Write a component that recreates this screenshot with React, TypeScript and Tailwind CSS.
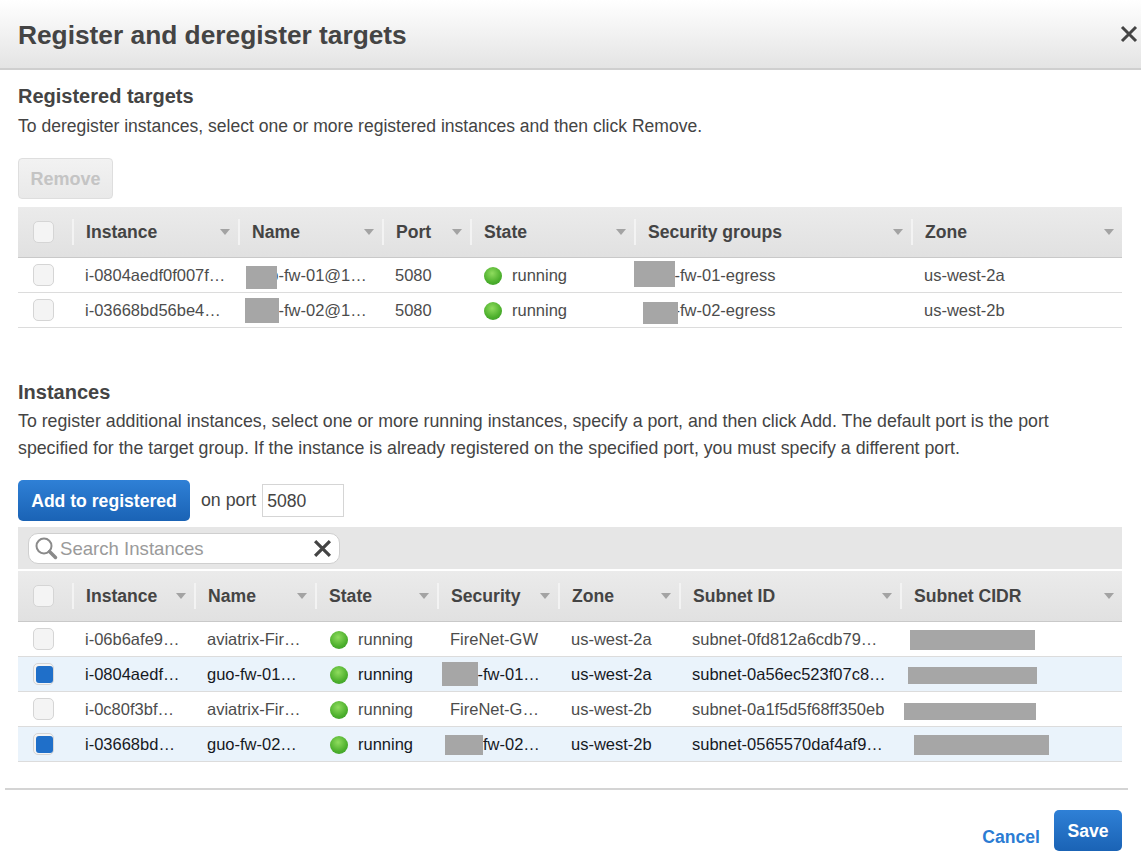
import React from "react";

type Row = {
  cells: React.ReactNode[];
  selected?: boolean;
  cover?: string[];
};

const registeredCols = "grid-cols-[54px_166px_144px_88px_164px_277px_211px]";
const instanceCols = "grid-cols-[54px_122px_121px_122px_121px_121px_221px_222px]";

const registeredHead = ["Instance", "Name", "Port", "State", "Security groups", "Zone"];
const instanceHead = ["Instance", "Name", "State", "Security", "Zone", "Subnet ID", "Subnet CIDR"];

function Running({ ml }: { ml: string }) {
  return (
    <span className={`flex items-center gap-[10px] ${ml}`}>
      <span className="h-[18px] w-[18px] rounded-full bg-[radial-gradient(circle_at_45%_35%,#8fdc5e,#4caf2c_60%,#35962a)]" />
      running
    </span>
  );
}

const registeredRows: Row[] = [
  {
    cells: ["i-0804aedf0f007f…", "guo-fw-01@1…", "5080", <Running ml="ml-[1px]" />, "guo-fw-01-egress", "us-west-2a"],
    cover: [
      "left-[228px] top-[8px] h-[23px] w-[31px]",
      "left-[616px] top-[3px] h-[26px] w-[41px]",
    ],
  },
  {
    cells: ["i-03668bd56be4…", "guo-fw-02@1…", "5080", <Running ml="ml-[1px]" />, "guo-fw-02-egress", "us-west-2b"],
    cover: [
      "left-[227px] top-[5px] h-[25px] w-[34px]",
      "left-[625px] top-[9px] h-[22px] w-[35px]",
    ],
  },
];

const instanceRows: Row[] = [
  {
    cells: ["i-06b6afe9…", "aviatrix-Fir…", <Running ml="ml-[2px]" />, "FireNet-GW", "us-west-2a", "subnet-0fd812a6cdb79…", ""],
    cover: ["left-[892px] top-[8px] h-[20px] w-[125px]"],
  },
  {
    selected: true,
    cells: ["i-0804aedf…", "guo-fw-01…", <Running ml="ml-[2px]" />, "guo-fw-01…", "us-west-2a", "subnet-0a56ec523f07c8…", ""],
    cover: [
      "left-[424px] top-[5px] h-[24px] w-[36px]",
      "left-[890px] top-[10px] h-[17px] w-[129px]",
    ],
  },
  {
    cells: ["i-0c80f3bf…", "aviatrix-Fir…", <Running ml="ml-[2px]" />, "FireNet-G…", "us-west-2b", "subnet-0a1f5d5f68ff350eb", ""],
    cover: ["left-[886px] top-[11px] h-[17px] w-[132px]"],
  },
  {
    selected: true,
    cells: ["i-03668bd…", "guo-fw-02…", <Running ml="ml-[2px]" />, "guo-fw-02…", "us-west-2b", "subnet-0565570daf4af9…", ""],
    cover: [
      "left-[427px] top-[8px] h-[20px] w-[38px]",
      "left-[896px] top-[8px] h-[20px] w-[135px]",
    ],
  },
];

function Checkbox({ checked }: { checked?: boolean }) {
  return (
    <span className="flex h-[22px] w-[21px] items-center justify-end rounded-[5px] border border-[#d5d5d5] bg-[#f4f4f4]">
      {checked && <span className="h-[17px] w-[17px] rounded-[3px] bg-[#1f6fc9]" />}
    </span>
  );
}

function Caret() {
  return (
    <svg width="10" height="6" viewBox="0 0 10 6" className="shrink-0">
      <path d="M0 0h10L5 6z" fill="#a3a3a3" />
    </svg>
  );
}

function DataTable({ cols, head, rows }: { cols: string; head: string[]; rows: Row[] }) {
  return (
    <div className="w-[1104px]">
      <div className={`grid h-[51px] items-center border-b border-[#c9c9c9] bg-gradient-to-b from-[#ebebeb] to-[#e1e1e1] ${cols}`}>
        <div className="pl-[15px]">
          <Checkbox />
        </div>
        {head.map((h) => (
          <div
            key={h}
            className="flex h-[26px] items-center justify-between border-l-2 border-[#f3f3f3] pl-[12px] pr-[8px] text-[17.6px] font-bold text-[#444]"
          >
            {h}
            <Caret />
          </div>
        ))}
      </div>
      {rows.map((row, i) => (
        <div
          key={i}
          className={`relative grid h-[35px] items-center border-b border-[#dcdcdc] text-[16.5px] ${cols} ${row.selected ? "bg-[#eaf3fb] text-[#16191f]" : "text-[#4c4c4c]"}`}
        >
          <div className="pl-[15px]">
            <Checkbox checked={row.selected} />
          </div>
          {row.cells.map((cell, j) => (
            <div key={j} className="whitespace-nowrap pl-[13px] pt-[1px]">
              {cell}
            </div>
          ))}
          {row.cover?.map((c) => (
            <span key={c} className={`absolute bg-[#a6a6a6] ${c}`} />
          ))}
        </div>
      ))}
    </div>
  );
}

function CloseIcon({ size }: { size: number }) {
  return (
    <svg width={size} height={size} viewBox="0 0 18 18" className="shrink-0">
      <path d="M2 2l14 14M16 2L2 16" stroke="#444" strokeWidth="3" />
    </svg>
  );
}

export default function App() {
  return (
    <div className="h-[864px] w-[1141px] overflow-hidden bg-white font-['Liberation_Sans',Arial,sans-serif] text-[#444]">
      {/* Title bar */}
      <div className="flex h-[70px] items-center justify-between border-b-2 border-[#cfcfcf] bg-gradient-to-b from-white to-[#e4e4e4] pl-[18px] pr-[3px]">
        <h1 className="pt-[4px] text-[26.3px] font-bold text-[#444]">Register and deregister targets</h1>
        <CloseIcon size={18} />
      </div>

      <div className="px-[18px]">
        {/* Registered targets */}
        <h2 className="mt-[15px] text-[20px] leading-[22px] font-bold">Registered targets</h2>
        <p className="mt-[8px] text-[17.55px] leading-[22px]">
          To deregister instances, select one or more registered instances and then click Remove.
        </p>
        <button className="mt-[21px] block h-[41px] w-[95px] rounded-[4px] border border-[#dedede] bg-gradient-to-b from-[#f2f2f2] to-[#e9e9e9] pt-[1px] text-[18px] font-bold text-[#c4c4c4]">
          Remove
        </button>
        <div className="mt-[8px]">
          <DataTable cols={registeredCols} head={registeredHead} rows={registeredRows} />
        </div>

        {/* Instances */}
        <h2 className="mt-[53px] text-[20px] leading-[22px] font-bold">Instances</h2>
        <p className="mt-[5px] text-[17.75px] leading-[27px]">
          To register additional instances, select one or more running instances, specify a port, and then click Add. The default port is the port
          <br />
          specified for the target group. If the instance is already registered on the specified port, you must specify a different port.
        </p>
        <div className="mt-[18px] flex h-[41px] items-center">
          <button className="h-[41px] w-[172px] rounded-[5px] bg-gradient-to-b from-[#2f80d6] to-[#1a63b5] pt-[1px] text-[17.6px] font-bold text-white">
            Add to registered
          </button>
          <span className="ml-[11px] text-[17.75px]">on port</span>
          <input
            readOnly
            defaultValue="5080"
            className="ml-[6px] h-[33px] w-[82px] border border-[#d5d5d5] bg-white px-[4px] pt-[1px] text-[17.6px] text-[#444] outline-none"
          />
        </div>
        <div className="mt-[6px] flex h-[42px] w-[1104px] items-center bg-[#e6e6e6] pl-[10px]">
          <div className="flex h-[31px] w-[312px] items-center rounded-[10px] border border-[#cfcfcf] bg-white pl-[5px] pr-[7px]">
            <svg width="24" height="24" viewBox="0 0 24 24" className="shrink-0">
              <circle cx="10" cy="10" r="7.5" fill="none" stroke="#8a8a8a" strokeWidth="2" />
              <path d="M15.5 15.5l6 6" stroke="#8a8a8a" strokeWidth="3.5" strokeLinecap="round" />
            </svg>
            <input
              readOnly
              placeholder="Search Instances"
              className="ml-[2px] w-0 flex-1 bg-transparent pt-[1px] text-[18.6px] outline-none placeholder:text-[#9a9a9a]"
            />
            <CloseIcon size={19} />
          </div>
        </div>
        <div className="mt-[2px]">
          <DataTable cols={instanceCols} head={instanceHead} rows={instanceRows} />
        </div>
      </div>

      {/* Footer */}
      <div className="mx-[5px] mt-[26px] flex w-[1123px] items-start justify-end border-t-2 border-[#d4d4d4] pt-[20px] pr-[6px]">
        <a className="mt-[14px] mr-[14px] text-[17.6px] font-bold text-[#2b7cd3]">Cancel</a>
        <button className="h-[41px] w-[68px] rounded-[5px] bg-gradient-to-b from-[#2f80d6] to-[#1a63b5] pt-[1px] text-[17.6px] font-bold text-white">
          Save
        </button>
      </div>
    </div>
  );
}
